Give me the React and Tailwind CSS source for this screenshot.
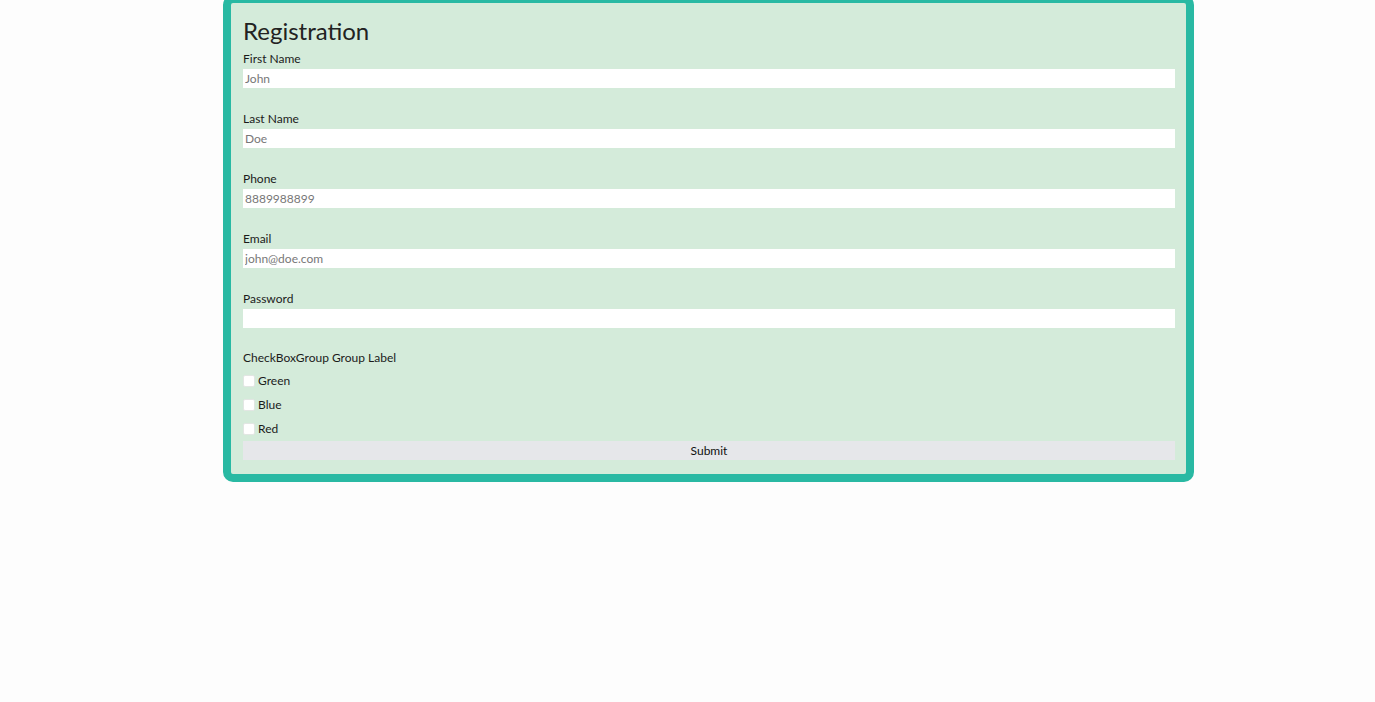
import React from "react";

const fields = [
  { label: "First Name", placeholder: "John", type: "text" },
  { label: "Last Name", placeholder: "Doe", type: "text" },
  { label: "Phone", placeholder: "8889988899", type: "tel" },
  { label: "Email", placeholder: "john@doe.com", type: "email" },
  { label: "Password", placeholder: "", type: "password" },
];

const colors = ["Green", "Blue", "Red"];

export default function App() {
  return (
    <div
      className="h-[702px] overflow-hidden bg-[#fdfdfd] text-[#1b1b1b]"
      style={{ fontFamily: "'Segoe UI', Lato, 'Noto Sans', sans-serif" }}
    >
      <div className="ml-[223px] -mt-[5px] w-[971px] rounded-[10px] border-[8px] border-[#29b9a3] bg-[#d4ebda]">
        <form className="flex flex-col pl-[12px] pr-[11px] pt-[12px] pb-[14px]">
          <h1 className="mb-[2px] text-[24px] leading-[32px] text-[#222]">Registration</h1>

          {fields.map((f) => (
            <div key={f.label} className="mb-[21px] flex flex-col">
              <label className="mt-[2px] mb-[2px] text-[12px] leading-[16px]">
                {f.label}
              </label>
              <input
                type={f.type}
                placeholder={f.placeholder}
                className="h-[19px] w-full bg-white px-[2px] text-[12px] outline-none placeholder:text-[#777]"
              />
            </div>
          ))}

          <div className="flex flex-col">
            <span className="mt-[1px] mb-[3px] text-[12px] leading-[16px]">
              CheckBoxGroup Group Label
            </span>
            {colors.map((c) => (
              <label key={c} className="flex h-[24px] items-center gap-[3px] text-[12px]">
                <span className="h-[12px] w-[12px] rounded-[2px] border border-[#e2e6e3] bg-white" />
                {c}
              </label>
            ))}
          </div>

          <button
            type="button"
            className="h-[19px] w-full bg-[#e6e7ea] text-[12px] leading-[19px] text-[#111]"
          >
            Submit
          </button>
        </form>
      </div>
    </div>
  );
}
